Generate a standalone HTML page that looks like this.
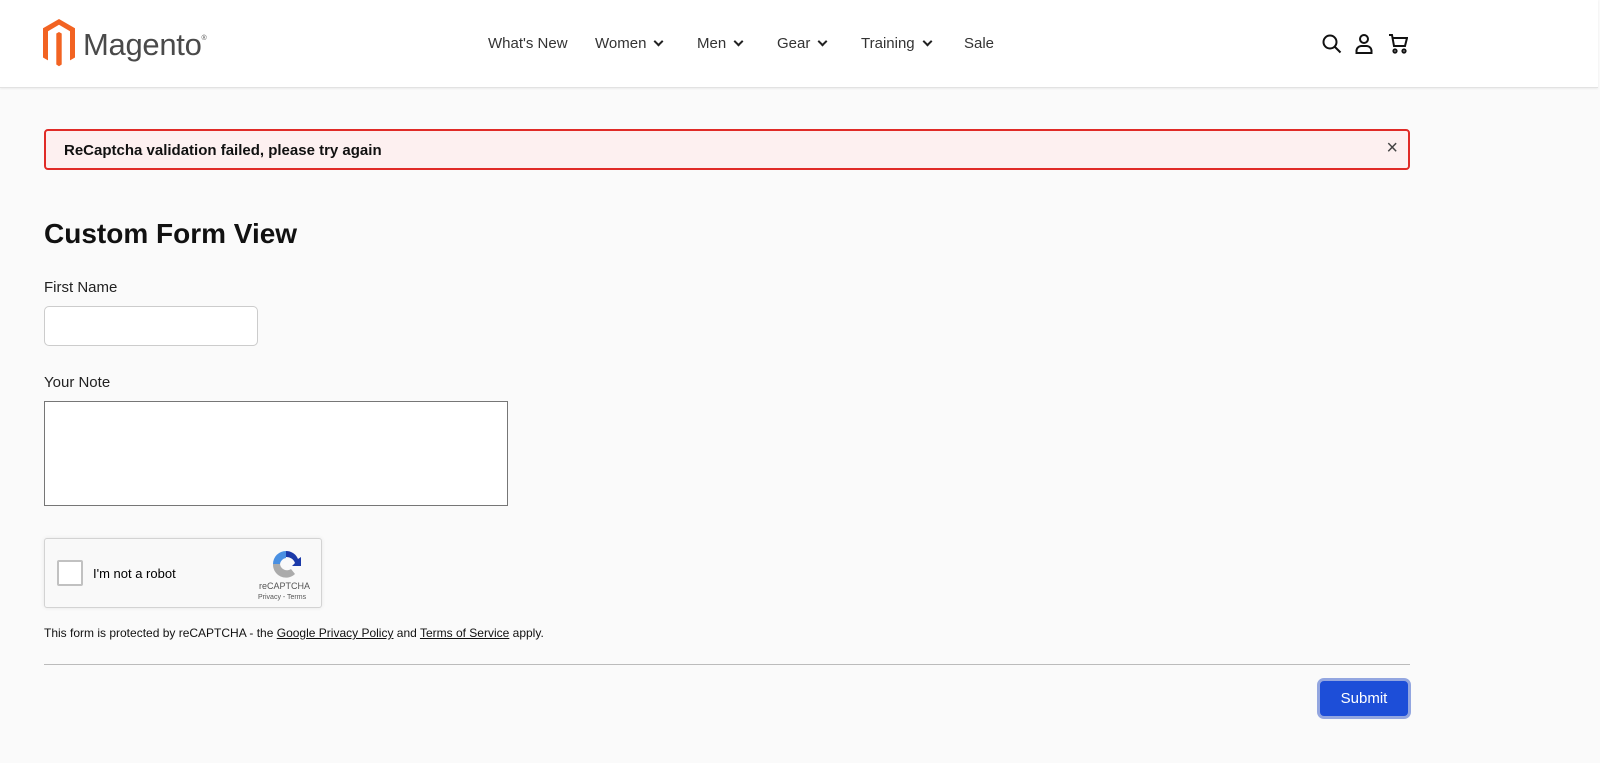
<!DOCTYPE html>
<html><head><style>
*{box-sizing:border-box;margin:0;padding:0}
body{width:1600px;height:763px;background:#fafafa;font-family:"Liberation Sans",sans-serif;color:#111;position:relative;overflow:hidden}
header{position:absolute;left:0;top:0;width:1598px;height:88px;background:#fff;border-bottom:1px solid #e2e2e2;box-shadow:0 1px 2px rgba(0,0,0,.06)}
.nav{position:absolute;top:35px;font-size:15px;color:#333}
.nav span{position:absolute;white-space:nowrap}
.chev{display:inline-block;width:7px;height:7px;border-right:2px solid #222;border-bottom:2px solid #222;transform:rotate(45deg);margin-left:9px;position:relative;top:-3px}
.msg{position:absolute;left:44px;top:129px;width:1366px;height:41px;background:#fdf0f0;border:2px solid #e02b27;border-radius:4px}
.msg b{position:absolute;left:18px;top:11px;font-size:15px}
h1{position:absolute;left:44px;top:218px;font-size:28px;font-weight:bold}
label{position:absolute;left:44px;font-size:15px;color:#222}
a{color:#111;text-decoration:underline}
</style></head><body>
<header>
<svg style="position:absolute;left:43px;top:19px" width="32" height="48" viewBox="0 0 32 48"><path d="M16 0L32 9.2V38.5L27 41.4V12.2L16 5.8 5 12.2V41.4L0 38.5V9.2Z" fill="#f26322"/><path d="M13.3 14.5L16 13 18.7 14.5V45.5L16 47.2 13.3 45.5Z" fill="#f26322"/></svg>
<div style="position:absolute;left:83px;top:27px;font-size:31px;color:#4a4a4a;letter-spacing:-0.3px">Magento<sup style="font-size:7px;position:relative;top:-4px">®</sup></div>
<div class="nav">
<span style="left:488px">What's New</span>
<span style="left:595px">Women<i class="chev"></i></span>
<span style="left:697px">Men<i class="chev"></i></span>
<span style="left:777px">Gear<i class="chev"></i></span>
<span style="left:861px">Training<i class="chev"></i></span>
<span style="left:964px">Sale</span>
</div>
<svg style="position:absolute;left:1322px;top:34px" width="20" height="20" viewBox="0 0 20 20" fill="none" stroke="#111" stroke-width="2"><circle cx="8" cy="8" r="6.5"/><path d="M13 13L18.5 18.5"/></svg>
<svg style="position:absolute;left:1355px;top:34px" width="18" height="20" viewBox="0 0 18 20" fill="none" stroke="#111" stroke-width="2"><circle cx="9" cy="5" r="4"/><path d="M1.5 19V17a5 5 0 0 1 5-5h5a5 5 0 0 1 5 5v2Z"/></svg>
<svg style="position:absolute;left:1388px;top:34px" width="20" height="20" viewBox="0 0 20 20" fill="none" stroke="#111" stroke-width="2"><path d="M1 1h3l2 11h11l2-8H5"/><circle cx="7" cy="17" r="1.6"/><circle cx="16" cy="17" r="1.6"/></svg>
</header>
<div class="msg"><b>ReCaptcha validation failed, please try again</b><span style="position:absolute;right:10px;top:6px;font-size:20px;color:#444">×</span></div>
<h1>Custom Form View</h1>
<label style="top:279px">First Name</label>
<div style="position:absolute;left:44px;top:306px;width:214px;height:40px;background:#fff;border:1px solid #ccc;border-radius:5px"></div>
<label style="top:374px">Your Note</label>
<div style="position:absolute;left:44px;top:401px;width:464px;height:105px;background:#fff;border:1px solid #767676"></div>
<div style="position:absolute;left:44px;top:538px;width:278px;height:70px;background:#f9f9f9;border:1px solid #d3d3d3;border-radius:3px;box-shadow:0 0 4px rgba(0,0,0,.08)">
<div style="position:absolute;left:12px;top:21px;width:26px;height:26px;background:#fff;border:2px solid #c1c1c1;border-radius:2px"></div>
<div style="position:absolute;left:48px;top:27px;font-size:13px;color:#000">I'm not a robot</div>
<svg style="position:absolute;left:225px;top:9px" width="32" height="32" viewBox="0 0 32 32"><path d="M16 3a13 13 0 0 1 12 8l3-2v9h-9l3-3a9 9 0 0 0-9-6z" fill="#1c3aa9"/><path d="M3 16a13 13 0 0 1 13-13v7a7 7 0 0 0-6 6z" fill="#4a90e2"/><path d="M3 16h7a7 7 0 0 0 11 5l4 5a13 13 0 0 1-22-10z" fill="#ababab"/></svg>
<div style="position:absolute;left:214px;top:42px;font-size:9px;color:#555">reCAPTCHA</div>
<div style="position:absolute;left:213px;top:55px;font-size:7px;color:#555">Privacy - Terms</div>
</div>
<div style="position:absolute;left:44px;top:626px;font-size:12px;color:#111">This form is protected by reCAPTCHA - the <a>Google Privacy Policy</a> and <a>Terms of Service</a> apply.</div>
<div style="position:absolute;left:44px;top:664px;width:1366px;height:1px;background:#bbb"></div>
<div style="position:absolute;left:1317px;top:678px;width:94px;height:41px;border-radius:7px;background:#1d4ed8;border:3px solid #93a6e0;color:#fff;font-size:15px;text-align:center;line-height:35px">Submit</div>
</body></html>
